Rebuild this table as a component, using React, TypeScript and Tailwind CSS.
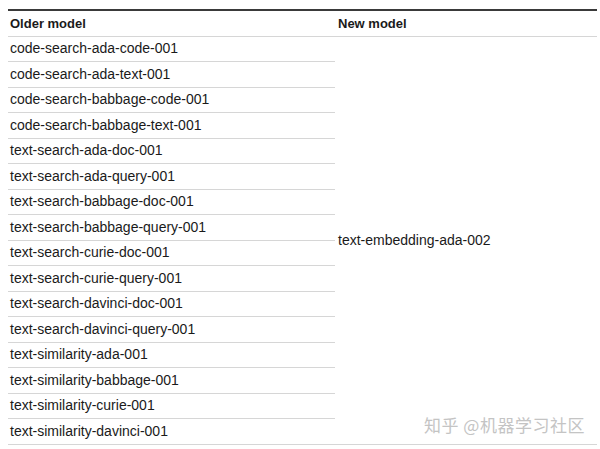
import React from 'react';

const OLD_MODELS = [
  'code-search-ada-code-001',
  'code-search-ada-text-001',
  'code-search-babbage-code-001',
  'code-search-babbage-text-001',
  'text-search-ada-doc-001',
  'text-search-ada-query-001',
  'text-search-babbage-doc-001',
  'text-search-babbage-query-001',
  'text-search-curie-doc-001',
  'text-search-curie-query-001',
  'text-search-davinci-doc-001',
  'text-search-davinci-query-001',
  'text-similarity-ada-001',
  'text-similarity-babbage-001',
  'text-similarity-curie-001',
  'text-similarity-davinci-001',
];

export default function App() {
  return (
    <div className="relative h-[449px] w-[600px] bg-white pt-[9px] pl-2 font-['Liberation_Sans',Arial,sans-serif] text-[14px] text-[#1a1a1a]">
      <table className="w-[589px] border-collapse">
        <thead>
          <tr className="h-[26px] border-t-2 border-b border-t-[#3a3a3a] border-b-[#d6d6d6] text-[13px]">
            <th className="w-[327px] pl-[2px] text-left font-bold">Older model</th>
            <th className="pl-[3px] text-left font-bold">New model</th>
          </tr>
        </thead>
        <tbody>
          {OLD_MODELS.map((name, i) => (
            <tr key={name} className="h-[25.5px]">
              <td className="border-b border-[#d6d6d6] pl-[2px]">{name}</td>
              {i === 0 && (
                <td rowSpan={OLD_MODELS.length} className="border-b border-[#d6d6d6] pl-[3px] align-middle">
                  text-embedding-ada-002
                </td>
              )}
            </tr>
          ))}
        </tbody>
      </table>
      {/* watermark */}
      <div className="absolute left-[424px] top-[412px] font-['Noto_Sans_CJK_SC',sans-serif] text-[17px] tracking-[0.5px] text-[#c4c4c4]">
        知乎 @机器学习社区
      </div>
    </div>
  );
}
